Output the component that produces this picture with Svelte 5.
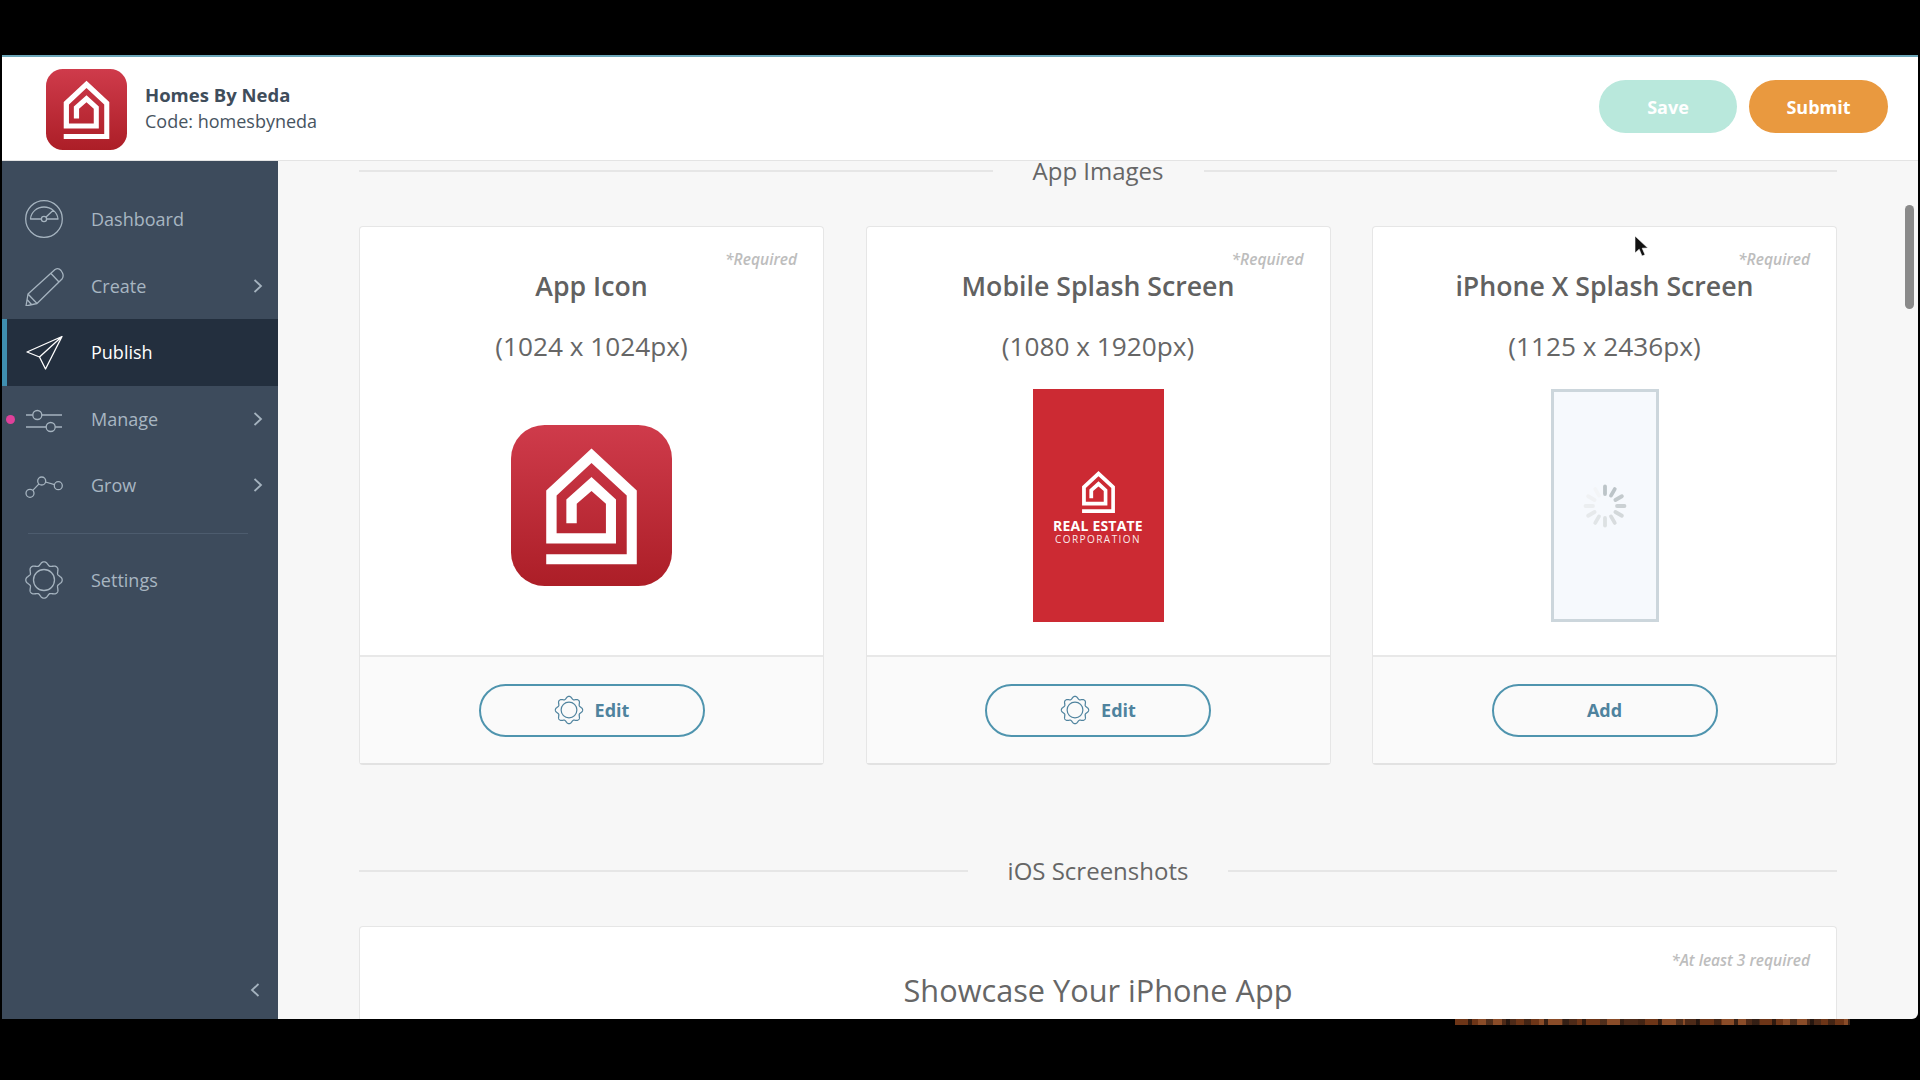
<script>
  const gearPath = (cx, cy, r, a, n = 8) => {
    let d = '';
    for (let i = 0; i <= 240; i++) {
      const t = (i / 240) * Math.PI * 2;
      const c = Math.cos(n * t);
      const rr = r + a * (c > 0 ? Math.pow(c, 0.7) : -Math.pow(-c, 1.3));
      d += (i ? 'L' : 'M') + (cx + rr * Math.sin(t)).toFixed(2) + ' ' + (cy - rr * Math.cos(t)).toFixed(2);
    }
    return d + 'Z';
  };
  const gear = gearPath(20, 20, 16.5, 1.7);
  const spokes = Array.from({ length: 12 }, (_, i) => ({
    angle: i * 30,
    color: ['#bcc4c8', '#bcc4c8', '#c3cacd', '#cbd1d4', '#d3d8da', '#d8dcde', '#dde1e3', '#e1e5e7', '#e6e9eb', '#ebeef0', '#f0f2f4', '#f3f5f7'][i]
  }));
  const house = 'M200 460L440 460L440 285L335 188L231 285L231 398L378 398L378 310L335 272L291 310L291 368L260 368L260 297L335 230L408 297L408 428L200 428L200 270L335 145L470 270L470 490L200 490Z';
  const nav = [
    { id: 'dash', label: 'Dashboard' },
    { id: 'create', label: 'Create', arrow: true },
    { id: 'publish', label: 'Publish', active: true },
    { id: 'manage', label: 'Manage', arrow: true, dot: true },
    { id: 'grow', label: 'Grow', arrow: true }
  ];
</script>

{#snippet appIcon(gid)}
  <svg viewBox="95 75 480 480" class="fill">
    <defs>
      <linearGradient id={gid} x1="0" y1="0" x2="0" y2="1">
        <stop offset="0" stop-color="#cf3b4b" />
        <stop offset="1" stop-color="#ac1e27" />
      </linearGradient>
    </defs>
    <rect x="95" y="75" width="480" height="480" rx="100" fill="url(#{gid})" />
    <path d={house} fill="#fff" />
  </svg>
{/snippet}

{#snippet navIcon(id)}
  <svg viewBox="0 0 40 40" class="nav-icon">
    {#if id === 'dash'}
      <circle cx="20" cy="20" r="18.3" />
      <path d="M17.4 20H6.5C7 13 13 8 20 8C27 8 33.4 13 34 20H22.6M21.8 18.2L29.5 11" />
      <circle cx="20" cy="20" r="2.6" />
    {:else if id === 'create'}
      <path d="M2 40L4 28L31 3.5Q34.5 1.5 37 4.5L38.5 7Q40 10.5 38 13L13 37.5ZM4 28L13 37.5M27 7.5L35 16M3 33.5L7.5 38.5" />
    {:else if id === 'publish'}
      <path d="M38 4.5L3 20L15.5 25L21.5 37ZM38 4.5L15.5 25" />
    {:else if id === 'manage'}
      <circle cx="13.3" cy="16" r="4.5" />
      <circle cx="26.7" cy="28" r="4.5" />
      <path d="M2 16H8.8M17.8 16H38M2 28H22.2M31.2 28H38" />
    {:else if id === 'grow'}
      <circle cx="6" cy="28.3" r="4" />
      <circle cx="17.7" cy="16" r="4" />
      <circle cx="34.3" cy="20.7" r="4" />
      <path d="M8.8 25.4L15 18.9M21.5 17L30.5 19.7" />
    {:else}
      <path d={gear} />
      <circle cx="20" cy="20" r="10.5" />
    {/if}
  </svg>
{/snippet}

{#snippet editBtn()}
  <button class="pill">
    <svg viewBox="0 0 40 40" class="btn-gear">
      <path d={gear} />
      <circle cx="20" cy="20" r="10.5" />
    </svg>
    Edit
  </button>
{/snippet}

<div class="window">
  <header class="topbar">
    <div class="logo">{@render appIcon('g1')}</div>
    <div class="brand">
      <div class="brand-name">Homes By Neda</div>
      <div class="brand-code">Code: homesbyneda</div>
    </div>
    <div class="actions">
      <button class="act save">Save</button>
      <button class="act submit">Submit</button>
    </div>
  </header>

  <div class="body">
    <aside class="sidebar">
      {#each nav as item}
        <div class="row" class:active={item.active}>
          {#if item.dot}<span class="dot"></span>{/if}
          {@render navIcon(item.id)}
          <span class="label">{item.label}</span>
          {#if item.arrow}
            <svg viewBox="0 0 10 14" class="chev"><path d="M1.5 1L8 7L1.5 13" /></svg>
          {/if}
        </div>
      {/each}
      <div class="sep"></div>
      <div class="row">
        {@render navIcon('settings')}
        <span class="label">Settings</span>
      </div>
      <div class="collapse">
        <svg viewBox="0 0 10 14" class="chev"><path d="M8.5 1L2 7L8.5 13" /></svg>
      </div>
    </aside>

    <main class="main">
      <div class="heading"><span>App Images</span></div>
      <section class="cards">
        <article class="card">
          <div class="card-top">
            <div class="req">*Required</div>
            <h2>App Icon</h2>
            <p>(1024 x 1024px)</p>
            <div class="media"><div class="big-icon">{@render appIcon('g2')}</div></div>
          </div>
          <div class="card-foot">{@render editBtn()}</div>
        </article>
        <article class="card">
          <div class="card-top">
            <div class="req">*Required</div>
            <h2>Mobile Splash Screen</h2>
            <p>(1080 x 1920px)</p>
            <div class="media">
              <div class="splash">
                <svg viewBox="200 145 270 345" class="splash-house"><path d={house} fill="#fff" /></svg>
                <div class="re">REAL ESTATE</div>
                <div class="corp">CORPORATION</div>
              </div>
            </div>
          </div>
          <div class="card-foot">{@render editBtn()}</div>
        </article>
        <article class="card">
          <div class="card-top">
            <div class="req">*Required</div>
            <h2>iPhone X Splash Screen</h2>
            <p>(1125 x 2436px)</p>
            <div class="media">
              <div class="placeholder">
                <svg viewBox="-22 -22 44 44" class="spinner">
                  {#each spokes as s}
                    <line x1="0" y1="-19.5" x2="0" y2="-12" stroke={s.color} transform="rotate({s.angle})" />
                  {/each}
                </svg>
              </div>
            </div>
          </div>
          <div class="card-foot"><button class="pill">Add</button></div>
        </article>
      </section>

      <div class="heading second"><span>iOS Screenshots</span></div>
      <section class="shots">
        <div class="req">*At least 3 required</div>
        <div class="shots-title">Showcase Your iPhone App</div>
      </section>

      <div class="scrollbar"></div>
      <svg class="cursor" viewBox="0 0 16 24">
        <path d="M1 1L1 18L5.2 14.2L8 21L11 19.8L8.2 13.2L13.8 13Z" fill="#111" stroke="#fff" stroke-width="0.6" />
      </svg>
    </main>
  </div>
</div>
<div class="desk"></div>

<style>
  :global(body) {
    margin: 0;
    background: #000;
    font-family: "Open Sans", "Liberation Sans", sans-serif;
    overflow: hidden;
  }
  .window {
    margin: 55px 2px 0 2px;
    height: 964px;
    display: flex;
    flex-direction: column;
    background: #f7f7f7;
    border-radius: 0 0 6px 0;
    overflow: hidden;
  }
  .topbar {
    flex: none;
    height: 106px;
    box-sizing: border-box;
    background: #fff;
    border-top: 2px solid #6ba6b8;
    border-bottom: 1px solid #e4e4e4;
    display: flex;
    align-items: center;
    padding: 0 30px 0 44px;
    position: relative;
    z-index: 1;
  }
  .logo { width: 81px; height: 81px; margin-right: 18px; margin-top: 1px; }
  .fill { display: block; width: 100%; height: 100%; }
  .brand { flex: 1; font-size: 18px; line-height: 27px; color: #47545f; margin-top: -2px; }
  .brand-name { font-weight: 700; font-size: 18.5px; color: #3f4d5b; }
  .actions { display: flex; gap: 12px; margin-top: -4px; }
  .act {
    width: 138px;
    height: 53px;
    border: 0;
    border-radius: 27px;
    color: #fff;
    font: 700 18px "Open Sans", sans-serif;
  }
  .save { background: #b9e8dc; }
  .submit { width: 139px; background: #e9993f; }

  .body { flex: 1; display: flex; min-height: 0; }
  .sidebar {
    flex: none;
    width: 276px;
    box-sizing: border-box;
    background: #3d4b5c;
    padding-top: 25px;
    display: flex;
    flex-direction: column;
    position: relative;
  }
  .row {
    height: 66.5px;
    display: flex;
    align-items: center;
    padding: 0 15px 0 22px;
    color: #a8b6c2;
    font-size: 18px;
    position: relative;
    box-sizing: border-box;
  }
  .row.active {
    background: #232f3e;
    color: #fff;
    box-shadow: inset 5px 0 0 #3f8fb0;
  }
  .nav-icon {
    width: 40px;
    height: 40px;
    margin-right: 27px;
    fill: none;
    stroke: #a5b3bf;
    stroke-width: 1.3;
    stroke-linejoin: round;
    flex: none;
  }
  .active .nav-icon { stroke: #fff; }
  .label { flex: 1; }
  .chev {
    width: 10px;
    height: 14px;
    fill: none;
    stroke: #a5b3bf;
    stroke-width: 1.8;
    flex: none;
  }
  .dot {
    position: absolute;
    left: 4px;
    top: 29px;
    width: 9px;
    height: 9px;
    border-radius: 50%;
    background: #e0409a;
  }
  .sep {
    height: 1px;
    margin: 14px 30px 13px 26px;
    background: #4d5c6e;
  }
  .collapse {
    margin-top: auto;
    padding: 0 18px 22px 0;
    display: flex;
    justify-content: flex-end;
  }

  .main {
    flex: 1;
    min-width: 0;
    padding: 0 81px;
    position: relative;
  }
  .heading {
    height: 20px;
    display: flex;
    align-items: center;
    gap: 40px;
    color: #666;
    font-size: 24px;
  }
  .heading span { margin-top: -2px; }
  .heading::before, .heading::after {
    content: "";
    flex: 1;
    height: 2px;
    background: #e6e6e6;
  }
  .heading.second { margin-top: 96px; }
  .cards {
    margin-top: 45px;
    display: grid;
    grid-template-columns: repeat(3, 1fr);
    gap: 41.5px;
  }
  .card {
    height: 539px;
    display: flex;
    flex-direction: column;
    box-sizing: border-box;
    background: #fff;
    border: 1px solid #e6e6e6;
    border-bottom: 2px solid #e2e2e2;
    border-radius: 4px;
  }
  .card-top {
    height: 430px;
    box-sizing: border-box;
    padding: 22px 26px 0;
    display: flex;
    flex-direction: column;
    text-align: center;
    border-bottom: 2px solid #e8e8e8;
  }
  .req {
    text-align: right;
    font-style: italic;
    font-weight: 600;
    font-size: 15.5px;
    line-height: 20px;
    color: #bdbdbd;
  }
  h2 {
    margin: 0;
    font-size: 26.7px;
    line-height: 34px;
    font-weight: 600;
    color: #616161;
  }
  .card-top p {
    margin: 26px 0 0;
    font-size: 26.2px;
    line-height: 34px;
    color: #666;
  }
  .media {
    margin-top: 26px;
    height: 233px;
    display: flex;
    align-items: center;
    justify-content: center;
  }
  .big-icon { width: 161px; height: 161px; }
  .splash {
    width: 131px;
    height: 233px;
    box-sizing: border-box;
    padding-top: 3px;
    background: #cc2a33;
    display: flex;
    flex-direction: column;
    align-items: center;
    justify-content: center;
    color: #fff;
  }
  .splash-house { width: 33px; height: 42px; }
  .re {
    margin-top: 5px;
    font-size: 14px;
    line-height: 16px;
    font-weight: 700;
    letter-spacing: 0.2px;
    white-space: nowrap;
  }
  .corp {
    font-size: 10px;
    line-height: 10px;
    letter-spacing: 1.45px;
    white-space: nowrap;
    opacity: 0.9;
  }
  .placeholder {
    width: 108px;
    height: 233px;
    box-sizing: border-box;
    background: #f6f9fd;
    border: 3px solid #ccd6dc;
    display: flex;
    align-items: center;
    justify-content: center;
  }
  .spinner { width: 44px; height: 44px; stroke-width: 3.8; stroke-linecap: round; }
  .card-foot {
    flex: 1;
    background: #fafafa;
    display: flex;
    align-items: center;
    justify-content: center;
  }
  .pill {
    width: 226px;
    height: 53px;
    box-sizing: border-box;
    background: transparent;
    border: 2px solid #4f94ae;
    border-radius: 27px;
    display: flex;
    align-items: center;
    justify-content: center;
    gap: 11px;
    color: #4f839e;
    font: 700 18px "Open Sans", sans-serif;
  }
  .btn-gear {
    width: 30px;
    height: 30px;
    fill: none;
    stroke: #4f839e;
    stroke-width: 1.6;
  }
  .shots {
    margin-top: 45px;
    height: 100px;
    box-sizing: border-box;
    padding: 23px 26px 0;
    background: #fff;
    border: 1px solid #e6e6e6;
    border-bottom: 0;
    border-radius: 4px 4px 0 0;
  }
  .shots-title {
    margin-top: -2px;
    text-align: center;
    font-size: 30.7px;
    line-height: 44px;
    color: #666;
  }
  .scrollbar {
    position: absolute;
    right: 4px;
    top: 44px;
    width: 9px;
    height: 104px;
    border-radius: 5px;
    background: #8a8a8a;
  }
  .cursor {
    position: absolute;
    left: 1356px;
    top: 74px;
    width: 16px;
    height: 24px;
  }
  .desk {
    height: 6px;
    margin-left: 1455px;
    width: 395px;
    background:
      repeating-linear-gradient(90deg, transparent 0 13px, rgba(20, 14, 12, 0.7) 13px 17px, transparent 17px 31px, rgba(30, 22, 18, 0.55) 31px 38px),
      repeating-linear-gradient(90deg, #6d3517 0 23px, #8a4c28 23px 47px, #4d2a18 47px 61px);
  }
</style>
